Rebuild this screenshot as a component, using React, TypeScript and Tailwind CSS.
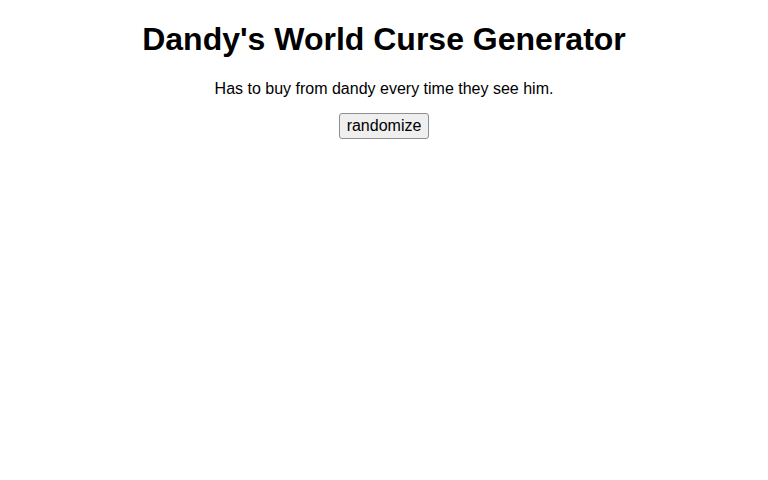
import { useState } from "react";

const curses = [
  "Has to buy from dandy every time they see him.",
  "Can only use one trinket for the whole run.",
  "Must hide in every room before leaving it.",
  "Cannot use any healing items.",
];

export default function App() {
  const [i, setI] = useState(0);
  return (
    <div
      className="min-h-screen bg-white text-black text-center pt-[21px]"
      style={{ fontFamily: '"Liberation Sans", Arial, sans-serif' }}
    >
      <h1 className="text-[32px] leading-[37px] font-bold">Dandy's World Curse Generator</h1>
      <p className="mt-[22px] text-[16px] leading-[18px]">{curses[i]}</p>
      <div className="mt-[15px]">
        <button
          className="text-[16px] leading-[18px] px-[7px] py-[3px] border border-[#8f8f8f] rounded-[3px] bg-[#efefef]"
          onClick={() => setI((i + 1) % curses.length)}
        >
          randomize
        </button>
      </div>
    </div>
  );
}
